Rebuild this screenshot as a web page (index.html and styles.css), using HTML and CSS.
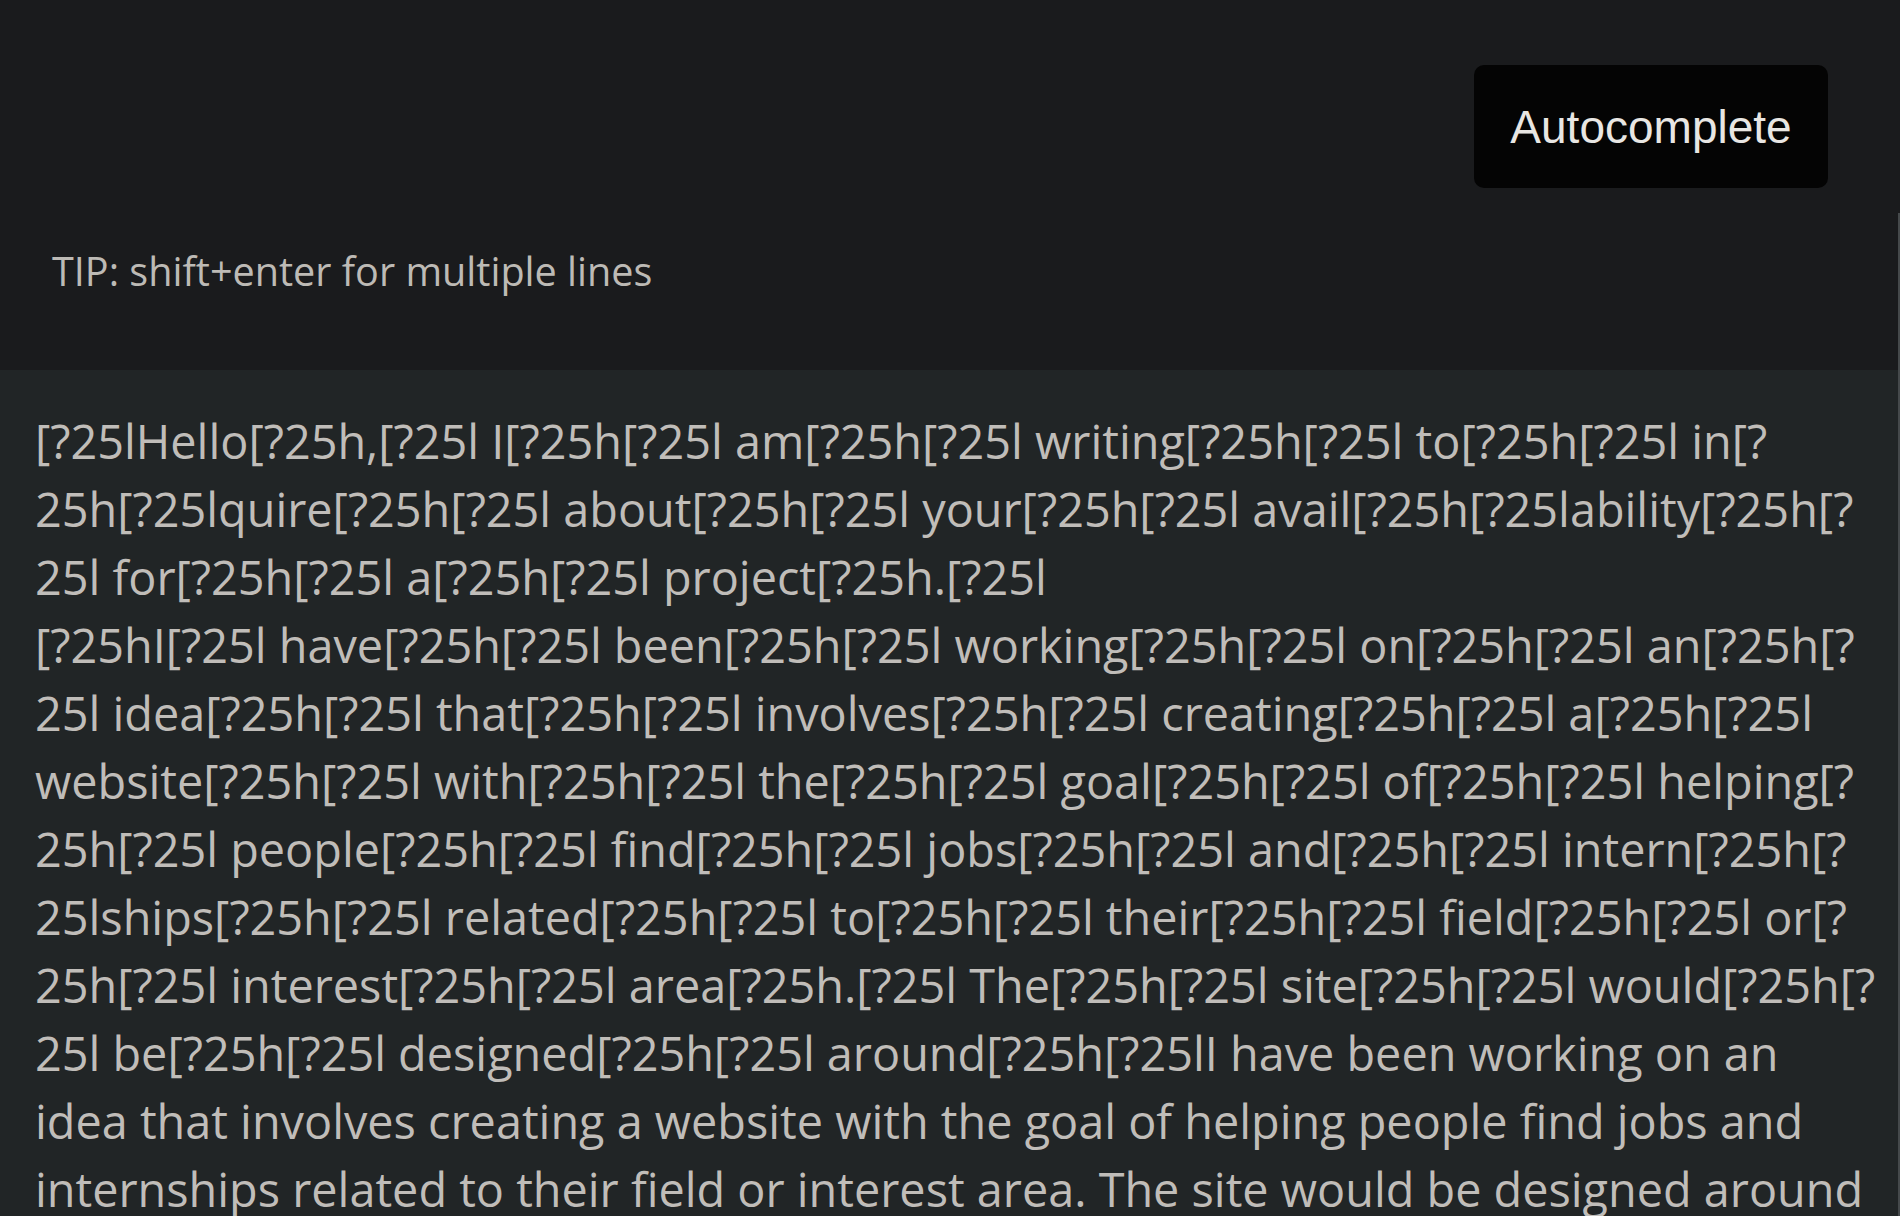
FILE: index.html
```html
<!DOCTYPE html>
<html>
<head>
<meta charset="utf-8">
<link rel="stylesheet" href="styles.css">
</head>
<body>
<div class="page">
  <header class="top">
    <div class="actions">
      <button class="btn">Autocomplete</button>
    </div>
    <div class="tip">TIP: shift+enter for multiple lines</div>
  </header>
  <main class="output">
    <div class="text">[?25lHello[?25h,[?25l I[?25h[?25l am[?25h[?25l writing[?25h[?25l to[?25h[?25l in[?25h[?25lquire[?25h[?25l about[?25h[?25l your[?25h[?25l avail[?25h[?25lability[?25h[?25l for[?25h[?25l a[?25h[?25l project[?25h.[?25l
[?25hI[?25l have[?25h[?25l been[?25h[?25l working[?25h[?25l on[?25h[?25l an[?25h[?25l idea[?25h[?25l that[?25h[?25l involves[?25h[?25l creating[?25h[?25l a[?25h[?25l website[?25h[?25l with[?25h[?25l the[?25h[?25l goal[?25h[?25l of[?25h[?25l helping[?25h[?25l people[?25h[?25l find[?25h[?25l jobs[?25h[?25l and[?25h[?25l intern[?25h[?25lships[?25h[?25l related[?25h[?25l to[?25h[?25l their[?25h[?25l field[?25h[?25l or[?25h[?25l interest[?25h[?25l area[?25h.[?25l The[?25h[?25l site[?25h[?25l would[?25h[?25l be[?25h[?25l designed[?25h[?25l around[?25h[?25lI have been working on an idea that involves creating a website with the goal of helping people find jobs and internships related to their field or interest area. The site would be designed around</div>
  </main>
</div>
</body>
</html>
```

FILE: styles.css
```css
html, body {
  margin: 0;
  padding: 0;
  height: 100%;
  overflow: hidden;
  background: #212526;
}
.page {
  position: relative;
  display: flex;
  flex-direction: column;
  height: 100%;
}
.page::after {
  content: "";
  position: absolute;
  right: 0;
  top: 213px;
  bottom: 0;
  width: 2px;
  background: #45494b;
}
.top {
  background: #1a1b1d;
  height: 370px;
  flex-shrink: 0;
  box-sizing: border-box;
  padding: 65px 72px 0 52px;
  display: flex;
  flex-direction: column;
}
.actions {
  display: flex;
  justify-content: flex-end;
}
.btn {
  width: 354px;
  height: 123px;
  background: #040404;
  color: #e8e6e3;
  border: none;
  border-radius: 10px;
  font-family: "Liberation Sans", Arial, sans-serif;
  font-size: 46px;
  padding: 0;
}
.tip {
  margin-top: 56px;
  font-family: "Open Sans", "Noto Sans", sans-serif;
  font-size: 39.6px;
  line-height: 54px;
  color: #bdbab5;
}
.output {
  flex: 1;
  padding: 37px 19px 0 35px;
}
.text {
  white-space: pre-wrap;
  font-family: "Open Sans", "Noto Sans", sans-serif;
  font-size: 46.8px;
  line-height: 68px;
  color: #c0bdb9;
}
```
